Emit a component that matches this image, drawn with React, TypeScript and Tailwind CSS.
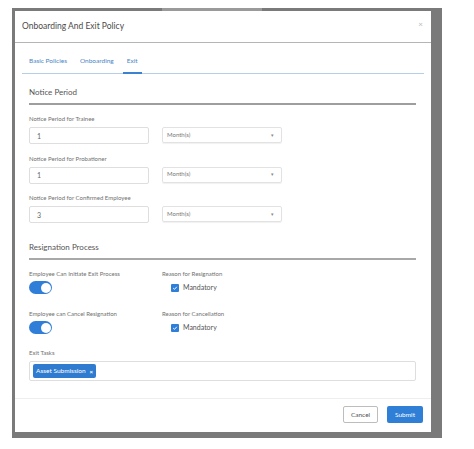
import React from 'react';

const font = { fontFamily: 'Lato, "Liberation Sans", sans-serif' };

function Toggle() {
  return (
    <div className="mt-[2px] flex h-[13px] w-[23px] items-center justify-end rounded-full bg-[#2f7fd8] pr-[1.5px]">
      <div className="h-[10px] w-[10px] rounded-full bg-white" />
    </div>
  );
}

function Check() {
  return (
    <div className="flex items-center gap-[4px] pl-[9px] pt-[3px]">
      <div className="flex h-[8px] w-[8px] items-center justify-center rounded-[1px] bg-[#2f7fd8]">
        <svg viewBox="0 0 10 10" className="h-[6px] w-[6px]">
          <path d="M2 5.2 L4.2 7.2 L8 3" fill="none" stroke="white" strokeWidth="1.6" />
        </svg>
      </div>
      <span className="text-[7px] text-[#555]">Mandatory</span>
    </div>
  );
}

function PeriodRow({ label, value }: { label: string; value: string }) {
  return (
    <div className="mt-[9.5px]">
      <div className="text-[6px] leading-[10px] text-[#707070]">{label}</div>
      <div className="mt-[3px] flex gap-[13px]">
        <div className="flex h-[17px] w-[120px] items-center rounded-[2px] border border-[#dedede] pl-[7px] text-[7px] text-[#666]">
          {value}
        </div>
        <div className="flex h-[16px] w-[120px] items-center justify-between rounded-[2px] border border-[#e2e2e2] pl-[4px] pr-[7px] text-[6px] text-[#777] shadow-[0_1px_1px_rgba(0,0,0,0.06)]">
          <span className="-mt-[2px]">Month(s)</span>
          <span className="text-[5px] text-[#888]">▾</span>
        </div>
      </div>
    </div>
  );
}

export default function App() {
  return (
    <div className="h-[449px] w-[474px] bg-white pl-[12px] pt-[8px]" style={font}>
      <div className="relative h-[430px] w-[430px] bg-[#7a7a7a] pl-[3px] pt-[3px]">
        <div className="absolute left-[150px] top-0 h-[3px] w-[100px] bg-[#9a9a9a]" />
        <div className="h-[421px] w-[416px] bg-white">
          {/* header */}
          <div className="flex h-[32px] items-center justify-between border-b border-[#b5b5b5] pl-[7px] pr-[8px]">
            <h1 className="text-[8.5px] text-[#4a4a4a]">Onboarding And Exit Policy</h1>
            <span className="-mt-[6px] text-[8px] text-[#bbb]">×</span>
          </div>

          {/* tabs */}
          <div className="mx-[7px] mt-[13px] flex border-b border-[#b6cfe8] pl-[3px] text-[6.5px] text-[#4a86c5]">
            <div className="px-[4px] pb-[7px]">Basic Policies</div>
            <div className="ml-[5px] px-[4px] pb-[7px]">Onboarding</div>
            <div className="ml-[5px] -mb-px border-b-2 border-[#3b82d0] px-[4px] pb-[6px]">Exit</div>
          </div>

          <div className="pl-[14px] pr-[15px]">
            {/* notice period */}
            <div className="mt-[12px] border-b-2 border-[#9e9e9e] pb-[5px] text-[8px] text-[#555]">Notice Period</div>
            <PeriodRow label="Notice Period for Trainee" value="1" />
            <PeriodRow label="Notice Period for Probationer" value="1" />
            <PeriodRow label="Notice Period for Confirmed Employee" value="3" />

            {/* resignation */}
            <div className="mt-[18px] border-b-2 border-[#a8a8a8] pb-[5px] text-[8px] text-[#555]">Resignation Process</div>

            <div className="mt-[9px] flex">
              <div className="w-[133px]">
                <div className="text-[6px] leading-[10px] text-[#707070]">Employee Can Initiate Exit Process</div>
                <Toggle />
              </div>
              <div>
                <div className="text-[6px] leading-[10px] text-[#707070]">Reason for Resignation</div>
                <Check />
              </div>
            </div>

            <div className="mt-[15px] flex">
              <div className="w-[133px]">
                <div className="text-[6px] leading-[10px] text-[#707070]">Employee can Cancel Resignation</div>
                <Toggle />
              </div>
              <div>
                <div className="text-[6px] leading-[10px] text-[#707070]">Reason for Cancellation</div>
                <Check />
              </div>
            </div>

            {/* exit tasks */}
            <div className="mt-[14px] text-[6px] leading-[10px] text-[#707070]">Exit Tasks</div>
            <div className="mt-[3px] flex h-[20px] items-center rounded-[2px] border border-[#dedede] pl-[3px]">
              <div className="flex h-[14px] items-center gap-[4px] rounded-[2px] bg-[#2f7bd0] px-[3px] text-[6.5px] text-white">
                <span>Asset Submission</span>
                <span className="text-[6px] font-bold">×</span>
              </div>
            </div>
          </div>

          {/* footer */}
          <div className="mt-[17px] flex justify-end gap-[9px] border-t border-[#eeeeee] pr-[8px] pt-[7px]">
            <button className="h-[17px] w-[35px] rounded-[2px] border border-[#bdbdbd] bg-white text-[6.5px] text-[#555]">
              Cancel
            </button>
            <button className="h-[17px] w-[36px] rounded-[2px] bg-[#2f7fd6] text-[6.5px] text-white">
              Submit
            </button>
          </div>
        </div>
      </div>
    </div>
  );
}
